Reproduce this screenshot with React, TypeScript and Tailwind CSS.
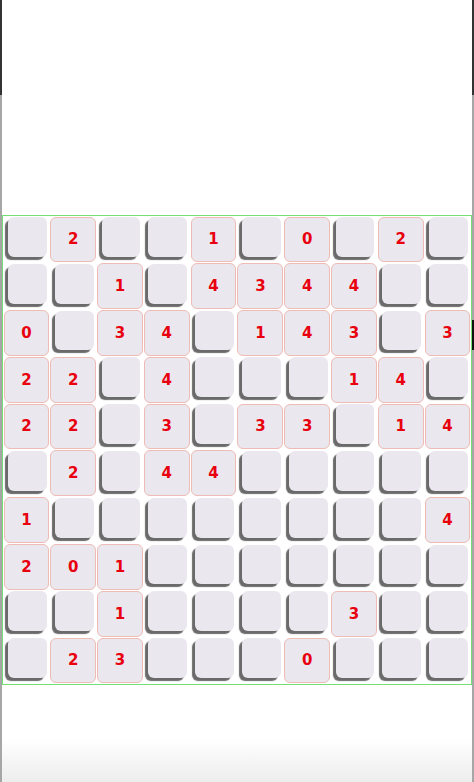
import React from "react";

// "" = covered tile, digit string = revealed tile
const board: string[][] = [
  ["", "2", "", "", "1", "", "0", "", "2", ""],
  ["", "", "1", "", "4", "3", "4", "4", "", ""],
  ["0", "", "3", "4", "", "1", "4", "3", "", "3"],
  ["2", "2", "", "4", "", "", "", "1", "4", ""],
  ["2", "2", "", "3", "", "3", "3", "", "1", "4"],
  ["", "2", "", "4", "4", "", "", "", "", ""],
  ["1", "", "", "", "", "", "", "", "", "4"],
  ["2", "0", "1", "", "", "", "", "", "", ""],
  ["", "", "1", "", "", "", "", "3", "", ""],
  ["", "2", "3", "", "", "", "0", "", "", ""],
];

function Tile({ value }: { value: string }) {
  if (value === "") {
    return (
      <div className="pt-px pr-[3px] pb-[6px] pl-[5px]">
        <div className="h-full rounded-md bg-[#ebe7ee] shadow-[-3px_3px_1px_#6a6a6a]" />
      </div>
    );
  }
  return (
    <div className="m-[0.5px] flex items-center justify-center rounded-md border border-[#eebcb4] bg-[#ebe7ee] font-['DejaVu_Sans',sans-serif] text-[15px] font-bold text-[#e8000e]">
      {value}
    </div>
  );
}

export default function App() {
  return (
    <div className="flex h-[782px] w-full">
      {/* left edge of the backdrop */}
      <div className="flex w-[2px] flex-col">
        <div className="h-[95px] bg-[#333333]" />
        <div className="flex-1 bg-[#a6a6a6]" />
      </div>

      <div className="flex flex-1 flex-col bg-white">
        <div className="h-[215px]" />
        <div className="grid h-[470px] grid-cols-10 grid-rows-10 border border-[#74df74]">
          {board.flatMap((row, r) =>
            row.map((v, c) => <Tile key={`${r}-${c}`} value={v} />)
          )}
        </div>
        <div className="flex-1 bg-gradient-to-b from-white from-55% to-[#ededed]" />
      </div>

      {/* right edge of the backdrop */}
      <div className="flex w-[2px] flex-col">
        <div className="h-[95px] bg-[#333333]" />
        <div className="h-[225px] bg-[#a6a6a6]" />
        <div className="h-[30px] bg-[#111111]" />
        <div className="flex-1 bg-[#a6a6a6]" />
      </div>
    </div>
  );
}
